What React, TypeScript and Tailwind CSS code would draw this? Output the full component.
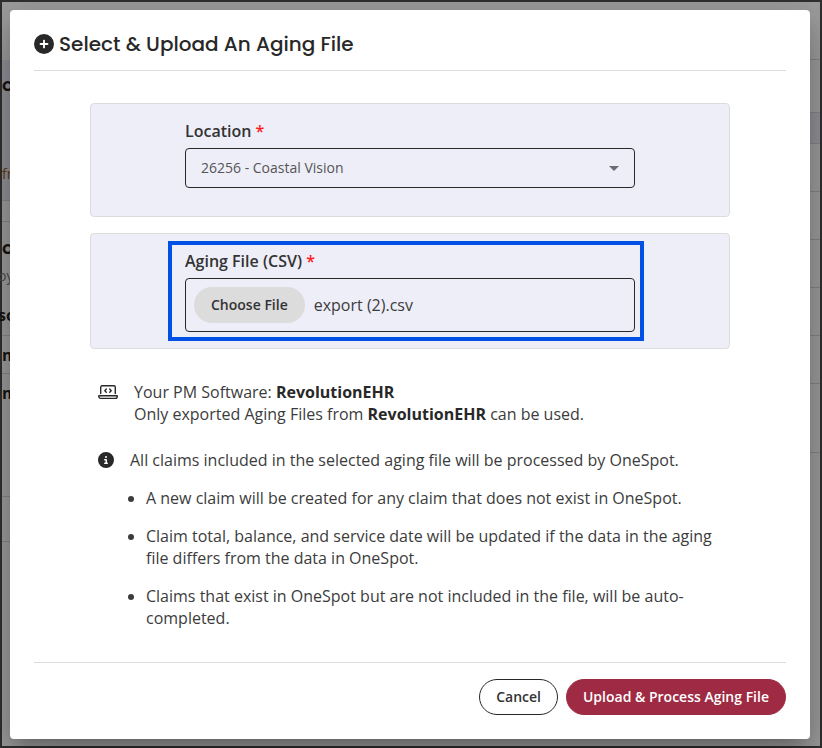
import React, { useRef, useState } from 'react';
import { FaCircleInfo, FaCirclePlus } from 'react-icons/fa6';

const leftRows = [
  { className: 'h-[58px]', text: '', textClass: '' },
  { className: 'h-[50px] bg-[#929198]', text: 'o', textClass: 'font-[Poppins,Inter,sans-serif] text-lg font-semibold text-[#151515]' },
  { className: 'h-[91px] bg-[#929198] border-b border-[#858585] items-end pb-4', text: 'fr', textClass: 'text-sm text-[#5e3c10]' },
  { className: 'h-[21px] border-b border-[#858585]', text: '', textClass: '' },
  { className: 'h-[40px] items-end', text: 'o', textClass: 'font-[Poppins,Inter,sans-serif] text-lg font-semibold text-[#151515]' },
  { className: 'h-[28px]', text: 'oy', textClass: '-ml-1 text-sm text-[#4c4c4c]' },
  { className: 'h-[46px] border-b border-[#858585] items-end pb-2', text: 'so', textClass: '-ml-1 text-base font-bold text-[#151515]' },
  { className: 'h-[38px] border-b border-[#858585]', text: 'm', textClass: 'text-base font-bold text-[#151515]' },
  { className: 'h-[37px]', text: 'm', textClass: 'text-base font-bold text-[#151515]' },
  { className: 'h-[86px] border-b border-[#858585]', text: '', textClass: '' },
  { className: 'h-[45px] border-b border-[#858585]', text: '', textClass: '' },
];

const rightRows = [
  'h-[58px] border-b',
  'h-[53px] border-b',
  'h-[31px] border-b bg-[#929198]',
  'h-[48px] border-b',
  'h-[48px] border-b',
  'h-[48px] border-b',
  'h-[48px] border-b',
  'h-[48px] border-b',
  'h-[69px] border-b',
];

const notes = [
  'A new claim will be created for any claim that does not exist in OneSpot.',
  'Claim total, balance, and service date will be updated if the data in the aging file differs from the data in OneSpot.',
  'Claims that exist in OneSpot but are not included in the file, will be auto-completed.',
];

function LaptopCodeIcon() {
  return (
    <svg width="20" height="16" viewBox="0 0 20 16" fill="none" stroke="#282828" strokeWidth="1.4" strokeLinecap="round" strokeLinejoin="round" aria-hidden="true">
      <path d="M2.7 9.6V3.2c0-.8.6-1.4 1.4-1.4h11.8c.8 0 1.4.6 1.4 1.4v6.4" />
      <path d="M.8 11.8h18.4v.7c0 1-.9 1.9-1.9 1.9H2.7c-1 0-1.9-.9-1.9-1.9z" />
      <path d="M8.3 5.1 6.8 6.7l1.5 1.6M11.7 5.1l1.5 1.6-1.5 1.6" />
    </svg>
  );
}

function Backdrop() {
  return (
    <div className="col-start-1 row-start-1 flex justify-between bg-[#9d9d9d]" aria-hidden="true">
      <div className="w-2">
        {leftRows.map((row, i) => (
          <div key={i} className={`flex items-center leading-5 ${row.className}`}>
            <span className={row.textClass}>{row.text}</span>
          </div>
        ))}
      </div>
      <div className="w-[10px]">
        {rightRows.map((row, i) => (
          <div key={i} className={`border-[#858585] ${row}`} />
        ))}
      </div>
    </div>
  );
}

export default function App() {
  const fileInput = useRef<HTMLInputElement>(null);
  const [fileName, setFileName] = useState('export (2).csv');

  return (
    <div className="grid min-h-screen border-2 border-[#303030] font-['Open_Sans',sans-serif] text-[#3c3c3c]">
      <Backdrop />

      <div
        role="dialog"
        aria-labelledby="dialog-title"
        className="relative col-start-1 row-start-1 mx-2 mt-2 mr-[10px] mb-[7px] self-start rounded bg-white p-6 shadow-[0_11px_15px_-7px_rgba(0,0,0,0.2),0_24px_38px_3px_rgba(0,0,0,0.14),0_9px_46px_8px_rgba(0,0,0,0.12)]"
      >
        {/* Header */}
        <header className="flex items-center gap-[5px] border-b border-[#dcdcdc] pb-4 text-[#282828]">
          <FaCirclePlus size={20} />
          <h2 id="dialog-title" className="font-[Poppins,Inter,sans-serif] text-xl leading-5 font-medium">
            Select &amp; Upload An Aging File
          </h2>
        </header>

        <div className="px-14 pt-8 pb-[33px]">
          {/* Location */}
          <div className="rounded border border-[#dcdcdc] bg-[#eeeef8] px-4 pt-4 pb-7">
            <div className="mx-auto max-w-[450px]">
              <label htmlFor="location" className="block leading-[22px] font-semibold text-[#333]">
                Location <span className="text-[#ff1a1a]">*</span>
              </label>
              <div className="relative mt-[6px]">
                <select id="location" className="h-10 w-full appearance-none rounded border border-[#282828] bg-transparent px-[15px] text-sm text-[#555]">
                  <option>26256 - Coastal Vision</option>
                </select>
                <svg className="pointer-events-none absolute top-[18px] right-4" width="10" height="5" viewBox="0 0 10 5" aria-hidden="true">
                  <path d="M0 0h10L5 5z" fill="#6b6b70" />
                </svg>
              </div>
            </div>
          </div>

          {/* Aging file */}
          <div className="mt-4 rounded border border-[#dcdcdc] bg-[#eeeef8] p-4">
            <div className="relative mx-auto max-w-[450px]">
              <div className="pointer-events-none absolute -inset-y-[9px] -right-[9px] -left-[17px] border-4 border-[#0050e6]" />
              <label htmlFor="aging-file" className="block leading-[22px] font-semibold text-[#333]">
                Aging File (CSV) <span className="text-[#ff1a1a]">*</span>
              </label>
              <div className="mt-[6px] flex items-center gap-[9px] rounded border border-[#282828] p-2">
                <input
                  ref={fileInput}
                  id="aging-file"
                  type="file"
                  accept=".csv"
                  className="sr-only"
                  onChange={e => setFileName(e.target.files?.[0]?.name ?? '')}
                />
                <button
                  type="button"
                  onClick={() => fileInput.current?.click()}
                  className="h-9 rounded-full bg-[#dcdcdc] px-[17px] text-sm font-semibold text-[#333]"
                >
                  Choose File
                </button>
                <span>{fileName}</span>
              </div>
            </div>
          </div>

          {/* Info */}
          <div className="mt-8 px-2 leading-[22px]">
            <div className="flex gap-4">
              <div className="pt-[3px]">
                <LaptopCodeIcon />
              </div>
              <p>
                Your PM Software: <b className="text-[#282828]">RevolutionEHR</b>
                <br />
                Only exported Aging Files from <b className="text-[#282828]">RevolutionEHR</b> can be used.
              </p>
            </div>
            <div className="mt-6 flex gap-4">
              <FaCircleInfo size={16} className="mt-[3px] shrink-0 text-[#282828]" />
              <p>All claims included in the selected aging file will be processed by OneSpot.</p>
            </div>
            <ul className="mt-4 list-disc space-y-4 pl-12">
              {notes.map(note => (
                <li key={note}>{note}</li>
              ))}
            </ul>
          </div>
        </div>

        {/* Actions */}
        <footer className="flex justify-end gap-2 border-t border-[#dcdcdc] pt-4 text-sm font-semibold">
          <button type="button" className="h-9 rounded-full border border-[#282828] px-4 text-[#333]">
            Cancel
          </button>
          <button type="button" className="h-9 rounded-full border border-[#9e2a43] bg-[#9e2a43] px-4 text-white">
            Upload &amp; Process Aging File
          </button>
        </footer>
      </div>
    </div>
  );
}
